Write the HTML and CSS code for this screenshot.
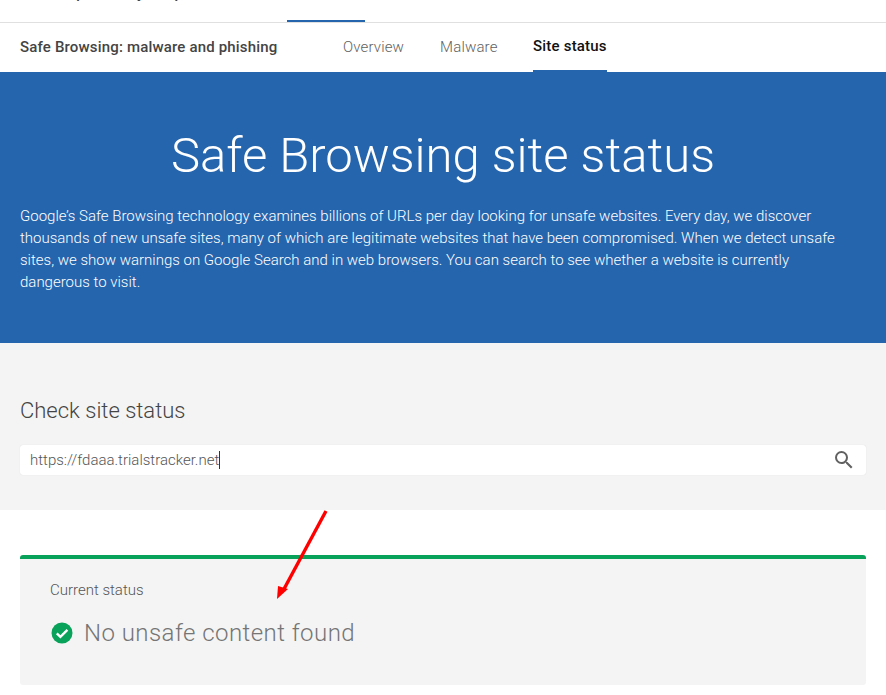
FILE: index.html
```html
<!DOCTYPE html>
<html lang="en">
<head>
    <meta charset="UTF-8">
    <meta name="viewport" content="width=device-width, initial-scale=1.0">
    <title>Safe Browsing site status</title>
    <link rel="stylesheet" href="styles.css">
</head>
<body>
    <div class="top-bar">
        <div class="top-title">Transparency Report</div>
        <div class="top-tab"></div>
    </div>

    <nav class="sub-nav">
        <div class="sub-title">Safe Browsing: malware and phishing</div>
        <div class="tabs">
            <a class="tab">Overview</a>
            <a class="tab">Malware</a>
            <a class="tab active">Site status</a>
        </div>
    </nav>

    <header class="hero">
        <h1>Safe Browsing site status</h1>
        <p>Google’s Safe Browsing technology examines billions of URLs per day looking for unsafe websites. Every day, we discover thousands of new unsafe sites, many of which are legitimate websites that have been compromised. When we detect unsafe sites, we show warnings on Google Search and in web browsers. You can search to see whether a website is currently dangerous to visit.</p>
    </header>

    <section class="check">
        <h2>Check site status</h2>
        <div class="search-box">
            <span class="search-text">https://fdaaa.trialstracker.net</span><span class="caret"></span>
            <svg class="search-icon" viewBox="0 0 24 24" width="24" height="24">
                <path fill="#616161" d="M15.5 14h-.79l-.28-.27A6.47 6.47 0 0 0 16 9.5 6.5 6.5 0 1 0 9.5 16c1.61 0 3.09-.59 4.23-1.57l.27.28v.79l5 4.99L20.49 19l-4.99-5zm-6 0C7.01 14 5 11.99 5 9.5S7.01 5 9.5 5 14 7.01 14 9.5 11.99 14 9.5 14z"/>
            </svg>
        </div>
    </section>

    <section class="result">
        <div class="status-card">
            <div class="status-label">Current status</div>
            <div class="status-row">
                <svg class="status-icon" viewBox="0 0 22 22" width="22" height="22">
                    <circle cx="11" cy="11" r="10.5" fill="#09a25a"/>
                    <path d="M5.8 11.4l3.6 3.5 7-7" fill="none" stroke="#fff" stroke-width="2.4"/>
                </svg>
                <span class="status-text">No unsafe content found</span>
            </div>
        </div>
    </section>

    <svg class="arrow" viewBox="0 0 60 100" width="60" height="100">
        <line x1="56" y1="1" x2="14" y2="79" stroke="#ff0000" stroke-width="3.4"/>
        <polygon points="7,89 8,76 18,79" fill="#ff0000"/>
    </svg>
</body>
</html>
```

FILE: styles.css
```css
html, body {
    margin: 0;
    padding: 0;
}
body {
    height: 695px;
    overflow: hidden;
    position: relative;
    background-color: #ffffff;
    font-family: Roboto, 'Liberation Sans', Arial, sans-serif;
}
.top-bar {
    height: 22px;
    border-bottom: 1px solid #e0e0e0;
    position: relative;
    overflow: hidden;
}
.top-title {
    margin-top: -22px;
    padding-left: 26px;
    font-size: 20px;
    line-height: 24px;
    color: #444444;
}
.top-tab {
    position: absolute;
    left: 287px;
    bottom: 0;
    width: 78px;
    height: 2px;
    background-color: #2565ae;
}
.sub-nav {
    height: 49px;
    display: flex;
    align-items: center;
    padding-left: 20px;
}
.sub-title {
    width: 323px;
    padding-bottom: 2px;
    font-size: 15px;
    font-weight: 500;
    letter-spacing: 0.17px;
    color: #444444;
}
.tabs {
    display: flex;
    gap: 36px;
    height: 100%;
}
.tab {
    display: flex;
    align-items: center;
    font-size: 15px;
    font-weight: 300;
    letter-spacing: 0.15px;
    color: #616161;
    box-sizing: border-box;
    border-bottom: 2px solid transparent;
}
.tab.active {
    margin-left: -0.5px;
    font-weight: 500;
    letter-spacing: 0.2px;
    color: #111111;
    padding-bottom: 1px;
    border-bottom-color: #2565ae;
}
.hero {
    height: 271px;
    box-sizing: border-box;
    padding: 54px 20px 0;
    background-color: #2565ae;
    color: #ffffff;
}
.hero h1 {
    margin: 0 0 19px;
    font-size: 49px;
    line-height: 60px;
    font-weight: 300;
    text-align: center;
}
.hero p {
    max-width: 836px;
    margin: 0;
    font-size: 15px;
    line-height: 22px;
    font-weight: 300;
}
.check {
    height: 167px;
    box-sizing: border-box;
    padding: 53px 20px 0;
    background-color: #f4f4f4;
}
.check h2 {
    margin: 0 0 19px;
    font-size: 22px;
    line-height: 30px;
    font-weight: 300;
    color: #444444;
}
.search-box {
    height: 30px;
    display: flex;
    align-items: center;
    padding: 0 10px;
    border-radius: 3px;
    background-color: #ffffff;
    box-shadow: 0 0 1px rgba(0, 0, 0, 0.15);
}
.search-text {
    font-size: 15px;
    font-weight: 300;
    color: #555555;
}
.caret {
    width: 1px;
    height: 18px;
    background-color: #333333;
}
.search-icon {
    margin-left: auto;
}
.result {
    padding: 45px 20px 0;
}
.status-card {
    height: 130px;
    box-sizing: border-box;
    padding: 21px 30px 0;
    border-top: 4px solid #09a25a;
    border-radius: 3px;
    background-color: #f4f4f4;
}
.status-label {
    font-size: 15px;
    line-height: 20px;
    font-weight: 300;
    color: #555555;
}
.status-row {
    display: flex;
    align-items: center;
    gap: 11px;
    margin-top: 17px;
    padding-left: 1px;
}
.status-text {
    font-size: 24px;
    line-height: 32px;
    font-weight: 300;
    letter-spacing: 0.45px;
    color: #757575;
}
.arrow {
    position: absolute;
    left: 270px;
    top: 510px;
}
```
